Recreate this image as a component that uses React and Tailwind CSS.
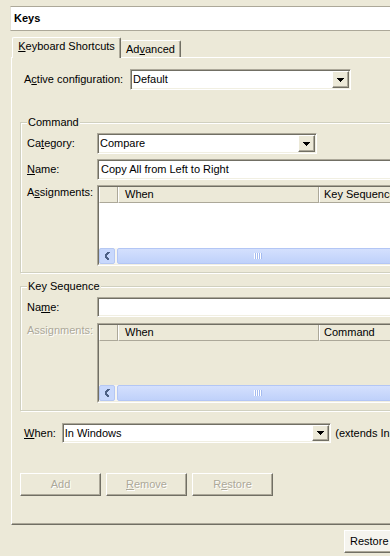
import React from "react";

const sunken =
  "border border-t-[#aca899] border-l-[#aca899] border-b-white border-r-white shadow-[inset_1px_1px_0_#716f64,inset_-1px_-1px_0_#f1efe2]";
const raised =
  "border border-t-white border-l-white border-b-[#716f64] border-r-[#716f64] shadow-[inset_-1px_-1px_0_#aca899]";
const disabled = "text-[#aca899] [text-shadow:1px_1px_0_#ffffff]";

const DownArrow = () => (
  <svg width="7" height="4" viewBox="0 0 7 4" shapeRendering="crispEdges">
    <rect x="0" y="0" width="7" height="1" fill="#000" />
    <rect x="1" y="1" width="5" height="1" fill="#000" />
    <rect x="2" y="2" width="3" height="1" fill="#000" />
    <rect x="3" y="3" width="1" height="1" fill="#000" />
  </svg>
);

const Combo = ({ value, className }) => (
  <div className={`flex items-stretch bg-white p-[1px] ${sunken} ${className}`}>
    <div className="flex flex-1 items-center pl-[1px] whitespace-nowrap">{value}</div>
    <div className={`flex w-[17px] items-center justify-center bg-[#ece9d8] ${raised}`}>
      <DownArrow />
    </div>
  </div>
);

const Input = ({ value, className }) => (
  <div className={`flex items-center bg-white pl-[3px] whitespace-nowrap ${sunken} ${className}`}>
    {value}
  </div>
);

const ScrollBar = () => (
  <div className="flex h-[16px] bg-[#f7f6f1]">
    <div className="flex w-[16px] items-center justify-center rounded-[2px] border border-[#b6c8f2] bg-[#c8d8fc]">
      <svg width="5" height="8" viewBox="0 0 5 8" shapeRendering="crispEdges">
        <path d="M4 0 L0 4 L4 8" fill="none" stroke="#4d6185" strokeWidth="1.6" />
      </svg>
    </div>
    <div className="ml-[2px] flex w-[280px] items-center justify-center rounded-[2px] border border-[#b3c6f5] bg-gradient-to-b from-[#d4e0fd] to-[#bfd1fa]">
      <div className="flex gap-[1px]">
        {[0, 1, 2, 3].map((i) => (
          <div key={i} className="h-[6px] w-[1px] bg-white shadow-[1px_0_0_#a4bbf0]" />
        ))}
      </div>
    </div>
  </div>
);

const HeaderCell = ({ children, className }) => (
  <div
    className={`flex h-full items-center border-l border-r border-b border-l-white border-r-[#aca899] border-b-[#aca899] bg-[#ece9d8] whitespace-nowrap ${className}`}
  >
    {children}
  </div>
);

const Table = ({ second, third, bodyBg, height, bodyH }) => (
  <div className={`border border-t-[#aca899] border-l-[#aca899] border-b-white border-r-white w-[330px] ${height}`}>
    <div className="flex h-full flex-col border border-t-[#716f64] border-l-[#716f64] border-b-[#f1efe2] border-r-[#f1efe2]">
      <div className="flex h-[16px]">
        <HeaderCell className="w-[19px]" />
        <HeaderCell className="w-[201px] pl-[6px]">{second}</HeaderCell>
        <HeaderCell className="flex-1 pl-[4px]">{third}</HeaderCell>
      </div>
      <div className={`${bodyH} ${bodyBg}`} />
      <ScrollBar />
    </div>
  </div>
);

const Group = ({ title, children, className }) => (
  <div
    className={`relative ml-[8px] w-[420px] border border-[#d0d0bf] pl-[6px] pt-[10px] shadow-[inset_1px_1px_0_#ffffff,1px_1px_0_#ffffff] ${className}`}
  >
    <span className="absolute -top-[8px] left-[6px] bg-[#ece9d8] px-[1px] leading-[14px]">{title}</span>
    {children}
  </div>
);

const Button = ({ children, className, dim }) => (
  <div
    className={`flex h-[23px] items-center justify-center ${raised} ${dim ? disabled : ""} ${className}`}
  >
    {children}
  </div>
);

export default function App() {
  return (
    <div className="h-[556px] w-[390px] overflow-hidden bg-[#ece9d8] text-[11px] leading-[13px] text-black font-['Liberation_Sans',Arial,sans-serif]">
      <div className="w-[450px] pl-[10px] pt-[6px]">
        {/* title */}
        <div className="flex h-[25px] items-center border-y border-l border-[#aca899] border-l-[#e4e2d6] bg-white pl-[3px] font-bold">
          Keys
        </div>

        {/* tabs */}
        <div className="ml-[2px] mt-[6px] flex items-end">
          <div className="relative z-10 -mb-px flex h-[21px] w-[109px] justify-center rounded-t-[2px] border-l border-t border-r border-l-white border-t-white border-r-[#716f64] bg-[#ece9d8] pt-[2px] shadow-[inset_-1px_0_0_#aca899]">
            <span>
              <u>K</u>eyboard Shortcuts
            </span>
          </div>
          <div className="flex h-[17px] w-[60px] justify-center rounded-t-[2px] border-t border-r border-t-white border-r-[#716f64] bg-[#ece9d8] pt-[2px] shadow-[inset_-1px_0_0_#aca899]">
            <span>
              Ad<u>v</u>anced
            </span>
          </div>
        </div>

        {/* tab panel */}
        <div className="ml-[1px] h-[468px] w-[430px] border-l border-t border-b border-l-white border-t-white border-b-[#716f64] shadow-[inset_0_-1px_0_#aca899]">
          <div className="mt-[11px] flex items-center">
            <div className="w-[118px] pl-[12px]">
              A<u>c</u>tive configuration:
            </div>
            <Combo value="Default" className="h-[21px] w-[221px]" />
          </div>

          <Group title="Command" className="mt-[32px] pb-[6px]">
            <div className="flex flex-col gap-[5px]">
              <div className="flex items-center">
                <div className="w-[70px]">
                  Ca<u>t</u>egory:
                </div>
                <Combo value="Compare" className="h-[21px] w-[220px]" />
              </div>
              <div className="flex items-center">
                <div className="w-[70px]">
                  <u>N</u>ame:
                </div>
                <Input value="Copy All from Left to Right" className="h-[21px] w-[330px]" />
              </div>
              <div className="flex items-start">
                <div className="w-[70px] pt-[1px]">
                  A<u>s</u>signments:
                </div>
                <Table second="When" third="Key Sequence" bodyBg="bg-white" height="h-[81px]" bodyH="h-[45px]" />
              </div>
            </div>
          </Group>

          <Group title="Key Sequence" className="mt-[13px] pb-[7px]">
            <div className="flex flex-col gap-[6px]">
              <div className="flex items-center">
                <div className="w-[70px]">
                  Na<u>m</u>e:
                </div>
                <Input value="" className="h-[20px] w-[330px]" />
              </div>
              <div className="flex items-start">
                <div className={`w-[70px] pt-[1px] ${disabled}`}>Assignments:</div>
                <Table second="When" third="Command" bodyBg="bg-[#ece9d8]" height="h-[80px]" bodyH="h-[44px]" />
              </div>
            </div>
          </Group>

          <div className="mt-[12px] flex items-center">
            <div className="w-[50px] pl-[12px]">
              <u>W</u>hen:
            </div>
            <Combo value="In Windows" className="h-[20px] w-[272px]" />
            <div className="ml-[4px] whitespace-nowrap">(extends In Windows)</div>
          </div>

          <div className="ml-[8px] mt-[30px] flex gap-[5px]">
            <Button dim className="w-[81px]">
              Add
            </Button>
            <Button dim className="w-[81px]">
              <span>
                <u>R</u>emove
              </span>
            </Button>
            <Button dim className="w-[81px]">
              <span>
                R<u>e</u>store
              </span>
            </Button>
          </div>
        </div>

        <div className="ml-[334px] mt-[5px] flex">
          <Button className="w-[75px] bg-[#f5f4ee] !justify-start pl-[5px]">Restore</Button>
        </div>
      </div>
    </div>
  );
}
